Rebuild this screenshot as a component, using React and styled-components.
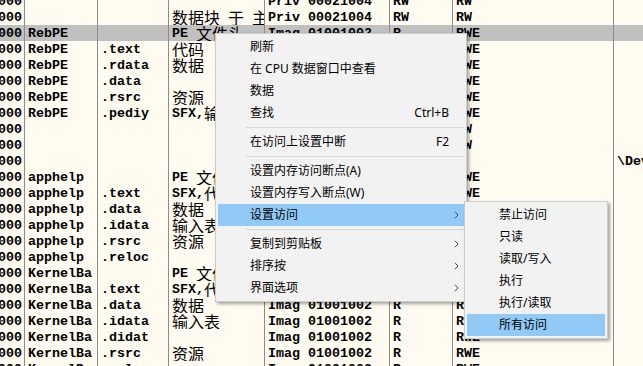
import React from "react";
import styled, { createGlobalStyle } from "styled-components";

const Global = createGlobalStyle`
  html, body { margin: 0; padding: 0; background: #FFFBF0; }
  body { width: 643px; height: 366px; overflow: hidden; }
`;

const Page = styled.div`
  position: relative;
  width: 643px;
  height: 366px;
  overflow: hidden;
  background: #FFFBF0;
`;

const Table = styled.div`
  display: flex;
  flex-direction: column;
  margin-top: -7px;
`;

const Row = styled.div`
  display: grid;
  grid-template-columns: 24px 73px 71px 96px 125px 63px 161px 1fr;
  grid-template-rows: 16px;
  height: 16px;
  background: ${(p) => (p.$selected ? "#C0C0C0" : "transparent")};
`;

const Cell = styled.div`
  box-sizing: border-box;
  border-left: 1px solid #8C8C8C;
  padding: 1px 0 0 3px;
  overflow: hidden;
  white-space: pre;
  font-family: "Liberation Mono", monospace;
  font-weight: bold;
  font-size: 13.33px;
  line-height: 15px;
  color: #000;
`;

const AddrCell = styled(Cell)`
  border-left: none;
  padding: 1px 2px 0 0;
  display: flex;
  justify-content: flex-end;
`;

const AddrText = styled.span`
  flex-shrink: 0;
`;

const Cjk = styled.span`
  font-family: "Noto Sans CJK SC", sans-serif;
  font-weight: 400;
  font-size: 16px;
  line-height: 15px;
  vertical-align: top;
`;

const Menu = styled.div`
  position: absolute;
  left: ${(p) => p.$x}px;
  top: ${(p) => p.$y}px;
  width: ${(p) => p.$w}px;
  box-sizing: border-box;
  display: flex;
  flex-direction: column;
  padding: 2px 0;
  background: #F2F2F2;
  border: 1px solid #CCCCCC;
  box-shadow: 2px 2px 3px rgba(0, 0, 0, 0.35);
  font-family: "Noto Sans", "Noto Sans CJK SC", sans-serif;
  font-size: 12px;
  line-height: 22px;
  color: #000;
`;

const Item = styled.div`
  display: flex;
  align-items: center;
  height: 22px;
  margin: 0 2px;
  padding-left: 32px;
  background: ${(p) => (p.$hot ? "#91C9F7" : "transparent")};
`;

const Label = styled.span`
  flex: 1;
  white-space: nowrap;
`;

const Shortcut = styled.span`
  white-space: nowrap;
`;

const Slot = styled.span`
  width: 15px;
  height: 22px;
  display: flex;
  align-items: center;
  justify-content: center;
`;

const Sep = styled.div`
  height: 1px;
  margin: 3px 2px 3px 30px;
  background: #D7D7D7;
`;

const Chevron = () => (
  <svg width="5" height="8" viewBox="0 0 5 8">
    <path d="M1 0.8L4 4L1 7.2" fill="none" stroke="#444" strokeWidth="1" />
  </svg>
);

const mixed = (s) =>
  s
    .split(/([^\x00-\x7F]+)/)
    .filter(Boolean)
    .map((part, i) =>
      /[^\x00-\x7F]/.test(part) ? (
        <Cjk key={i}>{part}</Cjk>
      ) : (
        <React.Fragment key={i}>{part}</React.Fragment>
      )
    );

const IM = "Imag 01001002";
const rows = [
  ["7FFDD000", "", "", "", "Priv 00021004", "RW", "RW", ""],
  ["7FFDE000", "", "", "数据块 于 主线程", "Priv 00021004", "RW", "RW", ""],
  ["01000000", "RebPE", "", "PE 文件头", IM, "R", "RWE", "", true],
  ["01001000", "RebPE", ".text", "代码", IM, "R", "RWE", ""],
  ["01004000", "RebPE", ".rdata", "数据", IM, "R", "RWE", ""],
  ["01005000", "RebPE", ".data", "", IM, "R", "RWE", ""],
  ["01006000", "RebPE", ".rsrc", "资源", IM, "R", "RWE", ""],
  ["01008000", "RebPE", ".pediy", "SFX,输入表", IM, "R", "RWE", ""],
  ["01010000", "", "", "", "Priv 00021004", "RW", "RW", ""],
  ["01020000", "", "", "", "Priv 00021004", "RW", "RW", ""],
  ["01030000", "", "", "", "Map  00041002", "R", "R", "\\Device\\HarddiskVolume2\\Windows\\System32\\locale.nls"],
  ["6D7B0000", "apphelp", "", "PE 文件头", IM, "R", "RWE", ""],
  ["6D7B1000", "apphelp", ".text", "SFX,代码", IM, "R", "RWE", ""],
  ["6D80F000", "apphelp", ".data", "数据", IM, "R", "RWE", ""],
  ["6D812000", "apphelp", ".idata", "输入表", IM, "R", "RWE", ""],
  ["6D815000", "apphelp", ".rsrc", "资源", IM, "R", "RWE", ""],
  ["6D838000", "apphelp", ".reloc", "", IM, "R", "RWE", ""],
  ["75C40000", "KernelBa", "", "PE 文件头", IM, "R", "RWE", ""],
  ["75C41000", "KernelBa", ".text", "SFX,代码", IM, "R", "RWE", ""],
  ["75E11000", "KernelBa", ".data", "数据", IM, "R", "RWE", ""],
  ["75E14000", "KernelBa", ".idata", "输入表", IM, "R", "RWE", ""],
  ["75E16000", "KernelBa", ".didat", "", IM, "R", "RWE", ""],
  ["75E17000", "KernelBa", ".rsrc", "资源", IM, "R", "RWE", ""],
  ["75E18000", "KernelBa", ".reloc", "", IM, "R", "RWE", ""],
];

const mainItems = [
  { label: "刷新" },
  { label: "在 CPU 数据窗口中查看" },
  { label: "数据" },
  { label: "查找", shortcut: "Ctrl+B" },
  { sep: true },
  { label: "在访问上设置中断", shortcut: "F2" },
  { sep: true },
  { label: "设置内存访问断点(A)" },
  { label: "设置内存写入断点(W)" },
  { label: "设置访问", sub: true, hot: true },
  { sep: true },
  { label: "复制到剪贴板", sub: true },
  { label: "排序按", sub: true },
  { label: "界面选项", sub: true },
];

const subItems = [
  { label: "禁止访问" },
  { label: "只读" },
  { label: "读取/写入" },
  { label: "执行" },
  { label: "执行/读取" },
  { label: "所有访问", hot: true },
];

const MenuList = ({ items, x, y, w }) => (
  <Menu $x={x} $y={y} $w={w}>
    {items.map((it, i) =>
      it.sep ? (
        <Sep key={i} />
      ) : (
        <Item key={i} $hot={it.hot}>
          <Label>{it.label}</Label>
          {it.shortcut && <Shortcut>{it.shortcut}</Shortcut>}
          <Slot>{it.sub && <Chevron />}</Slot>
        </Item>
      )
    )}
  </Menu>
);

export default function App() {
  return (
    <Page>
      <Global />
      <Table>
        {rows.map((r, i) => (
          <Row key={i} $selected={r[8]}>
            <AddrCell>
              <AddrText>{r[0]}</AddrText>
            </AddrCell>
            <Cell>{r[1]}</Cell>
            <Cell>{r[2]}</Cell>
            <Cell>{mixed(r[3])}</Cell>
            <Cell>{r[4]}</Cell>
            <Cell>{r[5]}</Cell>
            <Cell>{r[6]}</Cell>
            <Cell>{r[7]}</Cell>
          </Row>
        ))}
      </Table>
      <MenuList items={mainItems} x={215} y={33} w={252} />
      <MenuList items={subItems} x={464} y={201} w={144} />
    </Page>
  );
}
